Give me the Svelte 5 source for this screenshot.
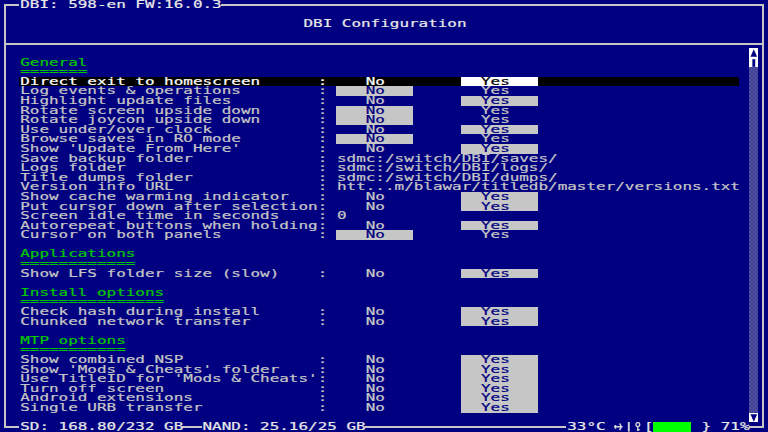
<script>
  const general = [
    { label: 'Direct exit to homescreen', on: 'yes', focus: true },
    { label: 'Log events & operations', on: 'no' },
    { label: 'Highlight update files', on: 'yes' },
    { label: 'Rotate screen upside down', on: 'no' },
    { label: 'Rotate joycon upside down', on: 'no' },
    { label: 'Use under/over clock', on: 'yes' },
    { label: 'Browse saves in RO mode', on: 'no' },
    { label: "Show 'Update From Here'", on: 'yes' },
    { label: 'Save backup folder', value: 'sdmc:/switch/DBI/saves/' },
    { label: 'Logs folder', value: 'sdmc:/switch/DBI/logs/' },
    { label: 'Title dumps folder', value: 'sdmc:/switch/DBI/dumps/' },
    { label: 'Version info URL', value: 'htt...m/blawar/titledb/master/versions.txt' },
    { label: 'Show cache warming indicator', on: 'yes' },
    { label: 'Put cursor down after selection', on: 'yes' },
    { label: 'Screen idle time in seconds', value: '0' },
    { label: 'Autorepeat buttons when holding', on: 'yes' },
    { label: 'Cursor on both panels', on: 'no' }
  ];

  const sections = [
    { title: 'General', rows: general },
    { title: 'Applications', rows: [{ label: 'Show LFS folder size (slow)', on: 'yes' }] },
    {
      title: 'Install options',
      rows: [
        { label: 'Check hash during install', on: 'yes' },
        { label: 'Chunked network transfer', on: 'yes' }
      ]
    },
    {
      title: 'MTP options',
      rows: [
        { label: 'Show combined NSP', on: 'yes' },
        { label: "Show 'Mods & Cheats' folder", on: 'yes' },
        { label: "Use TitleID for 'Mods & Cheats'", on: 'yes' },
        { label: 'Turn off screen', on: 'yes' },
        { label: 'Android extensions', on: 'yes' },
        { label: 'Single URB transfer', on: 'yes' }
      ]
    }
  ];
</script>

<div class="screen">
  <div class="frame">
    <header><span class="t title">DBI Configuration</span></header>
    <div class="body">
      <div class="list">
        {#each sections as s}
          <div class="row head"><span class="t">{s.title}</span></div>
          <div class="row head"><span class="t">{'='.repeat(s.title.length)}</span></div>
          {#each s.rows as r}
            <div class="row" class:focus={r.focus}>
              <span class="t label">{r.label}</span>
              <span class="t colon">:</span>
              {#if r.value}
                <span class="t value">{r.value}</span>
              {:else}
                <span class="opt no" class:sel={r.on === 'no'}><span class="t">No</span></span>
                <span class="opt yes" class:sel={r.on === 'yes'}><span class="t">Yes</span></span>
              {/if}
            </div>
          {/each}
          <div class="row"></div>
        {/each}
      </div>
      <div class="scroll">
        <div class="cell">
          <svg width="10" height="10" viewBox="0 0 10 10"><path d="M5 1 8.500 9h-7z" fill="#000080" /></svg>
        </div>
        <div class="cell">
          <svg width="10" height="10" viewBox="0 0 10 10"><rect x="3.500" y="1" width="3" height="8" fill="#000080" /></svg>
        </div>
        <div class="track"></div>
        <div class="cell">
          <svg width="10" height="10" viewBox="0 0 10 10"><path d="M1.500 1h7L5 9z" fill="#000080" /></svg>
        </div>
      </div>
    </div>
  </div>

  <div class="legend top"><span class="t">DBI: 598-en FW:16.0.3</span></div>

  <div class="legend bottom">
    <span class="seg sd"><span class="t">SD: 168.80/232 GB</span></span>
    <span class="seg nand"><span class="t">NAND: 25.16/25 GB</span></span>
    <span class="seg status">
      <span class="t temp">33°C</span>
      <svg class="ico" width="10" height="10" viewBox="0 0 10 10">
        <path d="M0 5h9M6 1.500 7.500 5 6 8.500M1.500 3v4" fill="none" stroke="#d8d8d8" stroke-width="1.600" />
      </svg>
      <svg class="ico" width="10" height="10" viewBox="0 0 10 10">
        <path d="M5 0v10" stroke="#d8d8d8" stroke-width="2" />
      </svg>
      <svg class="ico" width="10" height="10" viewBox="0 0 10 10">
        <circle cx="5" cy="2.600" r="2" fill="none" stroke="#d8d8d8" stroke-width="1.400" />
        <path d="M5 4.500V9.500M5 8h2" fill="none" stroke="#d8d8d8" stroke-width="1.500" />
      </svg>
      <span class="t bracket">[</span>
      <span class="battery"></span>
      <span class="t close">&#125;</span>
      <span class="t pct">71%</span>
    </span>
  </div>
</div>

<style>
  :global(body) {
    margin: 0;
    background: #000080;
  }

  .screen {
    --c: 9.6px;
    position: relative;
    width: 768px;
    height: 432px;
    overflow: hidden;
    background: #000080;
    color: #c6c6c6;
    font-family: 'DejaVu Sans Mono', monospace;
    font-size: 15.94px;
    line-height: 9.6px;
  }

  .t {
    display: inline-block;
    white-space: pre;
    -webkit-text-stroke: 0.3px currentColor;
    transform: translateX(1px) scaleY(0.67);
  }

  .frame {
    box-sizing: border-box;
    margin: 4px 4px 0;
    height: 424px;
    border: 2px solid #c6c6c6;
  }

  header {
    box-sizing: border-box;
    height: 38.500px;
    padding-top: 13.200px;
    border-bottom: 2px solid #c6c6c6;
    text-align: center;
  }

  .title {
    color: #e8e8e8;
  }

  .body {
    display: flex;
    padding: 3.500px 0 0 13.200px;
  }

  .list {
    width: calc(var(--c) * 75);
    margin-top: var(--c);
    margin-right: var(--c);
  }

  .row {
    display: flex;
    height: var(--c);
    white-space: pre;
  }

  .head {
    color: #00c800;
  }

  .label {
    width: calc(var(--c) * 31);
  }

  .colon {
    width: calc(var(--c) * 2);
  }

  .opt {
    box-sizing: border-box;
    width: calc(var(--c) * 8);
    height: var(--c);
  }

  .no {
    padding-left: calc(var(--c) * 3);
  }

  .yes {
    margin-left: calc(var(--c) * 5);
    padding-left: calc(var(--c) * 2);
  }

  .sel {
    background: #c6c6c6;
    color: #000080;
  }

  .focus {
    background: #000;
    color: #fff;
  }

  .focus .sel {
    background: #fff;
    color: #000;
  }

  .scroll {
    display: flex;
    flex-direction: column;
    width: var(--c);
    height: calc(var(--c) * 39);
  }

  .cell {
    display: flex;
    height: var(--c);
    background: #fff;
  }

  .track {
    flex: 1;
    background: repeating-conic-gradient(#3f3f98 0 25%, #51519f 0 50%) 0 0 / 4px 4px;
  }

  .legend {
    position: absolute;
    left: calc(var(--c) * 2);
    display: flex;
    height: var(--c);
    color: #e8e8e8;
  }

  .legend.top {
    top: 0;
    background: #000080;
  }

  .legend.bottom {
    top: calc(var(--c) * 44);
  }

  .seg {
    display: flex;
    background: #000080;
  }

  .nand {
    margin-left: calc(var(--c) * 2);
  }

  .status {
    margin-left: calc(var(--c) * 21);
    width: calc(var(--c) * 19);
  }

  .temp {
    width: calc(var(--c) * 5);
  }

  .ico {
    width: var(--c);
    height: var(--c);
  }

  .bracket {
    width: var(--c);
  }

  .battery {
    width: calc(var(--c) * 4);
    height: var(--c);
    background: #00ff00;
  }

  .close {
    width: var(--c);
    margin-left: var(--c);
    margin-right: var(--c);
  }
</style>
